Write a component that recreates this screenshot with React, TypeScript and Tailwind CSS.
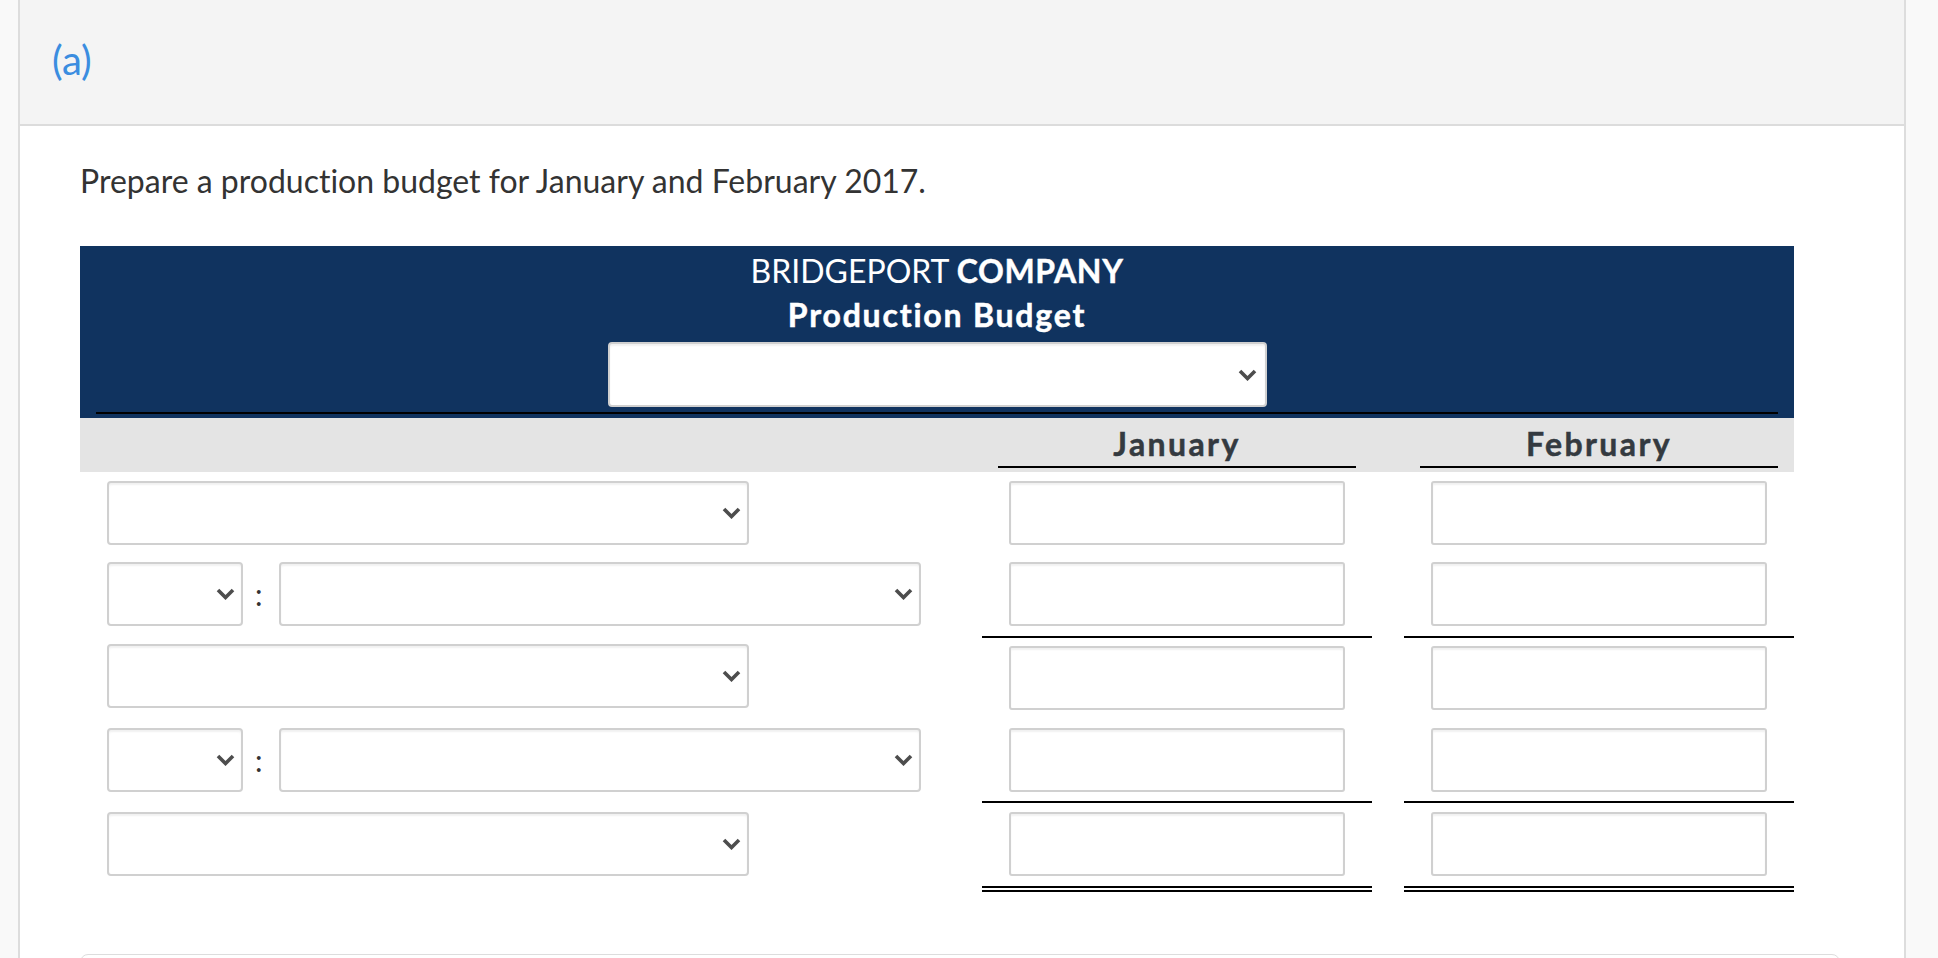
import React from "react";

const Chevron = () => (
  <svg width="19" height="12" viewBox="0 0 19 12" className="shrink-0">
    <polyline points="2,2 9.5,9.5 17,2" fill="none" stroke="#4d4d4d" strokeWidth="3.6" />
  </svg>
);

const Select = ({ className }: { className: string }) => (
  <div
    className={
      "flex items-center justify-end pr-[6px] bg-white border-2 border-[#d0d0d0] rounded-[4px] shadow-[inset_0_2px_2px_rgba(0,0,0,0.06)] " +
      className
    }
  >
    <Chevron />
  </div>
);

const Input = () => (
  <div className="h-[64px] w-full bg-white border-2 border-[#d0d0d0] rounded-[3px] shadow-[inset_0_2px_2px_rgba(0,0,0,0.06)]" />
);

const LongSelect = () => <Select className="w-[642px] h-[64px]" />;

const PairSelect = () => (
  <div className="flex items-center">
    <Select className="w-[136px] h-[64px]" />
    <span className="w-[36px] pl-[12px] text-[30px] leading-[36px] text-[#333]">:</span>
    <Select className="w-[642px] h-[64px]" />
  </div>
);

export default function App() {
  return (
    <div className="h-screen overflow-hidden bg-[#f9f9f9] font-['Lato',sans-serif] [font-variant-ligatures:none]">
      <div className="ml-[18px] w-[1888px] h-full bg-white border-x-2 border-[#dddddd]">
        <div className="h-[126px] bg-[#f4f4f4] border-b-2 border-[#dcdcdc] pl-[32px] pt-[38px]">
          <div className="text-[40px] leading-[44px] text-[#3b8de0]">(a)</div>
        </div>
        <div className="pl-[60px] pt-[37px]">
          <p className="text-[32px] leading-[36px] text-[#333]">
            Prepare a production budget for January and February 2017.
          </p>
          <div className="mt-[47px] w-[1714px]">
            <div className="bg-[#10335f] pt-[3px] pb-[4px] text-white text-center">
              <div className="text-[32px] leading-[44px]">
                BRIDGEPORT{" "}
                <span className="font-bold tracking-[0.6px] [-webkit-text-stroke:0.4px_white]">COMPANY</span>
              </div>
              <div className="text-[32px] leading-[44px] font-bold tracking-[1.8px] [-webkit-text-stroke:0.5px_white]">
                Production Budget
              </div>
              <div className="flex justify-center mt-[5px]">
                <Select className="w-[659px] h-[65px] pr-[8px]" />
              </div>
              <div className="mx-[16px] mt-[5px] h-[2px] bg-black" />
            </div>
            <div className="flex h-[54px] bg-[#e4e4e4] pt-[4px] text-[32px] leading-[44px] font-bold tracking-[2.4px] text-[#343a40] [-webkit-text-stroke:0.5px_#343a40]">
              <div className="w-[902px]" />
              <div className="w-[390px] px-[16px]">
                <div className="border-b-2 border-black text-center">January</div>
              </div>
              <div className="w-[32px]" />
              <div className="w-[390px] px-[16px]">
                <div className="border-b-2 border-black text-center">February</div>
              </div>
            </div>

            <div className="flex">
              <div className="w-[902px] pl-[27px] pt-[9px]">
                <LongSelect />
              </div>
              <div className="w-[390px] px-[27px] pt-[9px] pb-[8px]">
                <Input />
              </div>
              <div className="w-[32px]" />
              <div className="w-[390px] px-[27px] pt-[9px] pb-[8px]">
                <Input />
              </div>
            </div>

            <div className="flex">
              <div className="w-[902px] pl-[27px] pt-[9px]">
                <PairSelect />
              </div>
              <div className="w-[390px] px-[27px] pt-[9px] pb-[10px] border-b-2 border-black">
                <Input />
              </div>
              <div className="w-[32px]" />
              <div className="w-[390px] px-[27px] pt-[9px] pb-[10px] border-b-2 border-black">
                <Input />
              </div>
            </div>

            <div className="flex">
              <div className="w-[902px] pl-[27px] pt-[6px]">
                <LongSelect />
              </div>
              <div className="w-[390px] px-[27px] pt-[8px] pb-[9px]">
                <Input />
              </div>
              <div className="w-[32px]" />
              <div className="w-[390px] px-[27px] pt-[8px] pb-[9px]">
                <Input />
              </div>
            </div>

            <div className="flex">
              <div className="w-[902px] pl-[27px] pt-[9px]">
                <PairSelect />
              </div>
              <div className="w-[390px] px-[27px] pt-[9px] pb-[9px] border-b-2 border-black">
                <Input />
              </div>
              <div className="w-[32px]" />
              <div className="w-[390px] px-[27px] pt-[9px] pb-[9px] border-b-2 border-black">
                <Input />
              </div>
            </div>

            <div className="flex">
              <div className="w-[902px] pl-[27px] pt-[9px]">
                <LongSelect />
              </div>
              <div className="w-[390px] px-[27px] pt-[9px] pb-[10px] border-b-[6px] border-double border-black">
                <Input />
              </div>
              <div className="w-[32px]" />
              <div className="w-[390px] px-[27px] pt-[9px] pb-[10px] border-b-[6px] border-double border-black">
                <Input />
              </div>
            </div>
          </div>
          <div className="mt-[62px] w-[1760px] h-[40px] border border-[#dddddd] rounded-t-[8px]" />
        </div>
      </div>
    </div>
  );
}
